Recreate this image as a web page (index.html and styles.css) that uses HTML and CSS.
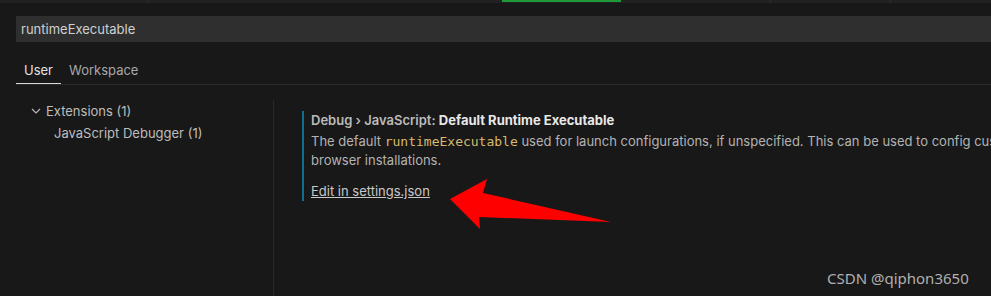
FILE: index.html
```html
<!DOCTYPE html>
<html lang="en">
<head>
    <meta charset="UTF-8">
    <title>Settings</title>
    <link rel="stylesheet" href="styles.css">
</head>
<body>
    <div class="topbar">
        <span class="sep sep-a"></span>
        <span class="progress"></span>
        <span class="sep sep-b"></span>
        <span class="sep sep-c"></span>
    </div>

    <div class="search">runtimeExecutable</div>

    <div class="tabs">
        <span class="tab active">User</span>
        <span class="tab">Workspace</span>
    </div>

    <div class="main">
        <div class="tree">
            <div class="tree-row">
                <svg class="chevron" width="12" height="12" viewBox="0 0 12 12"><path d="M2 4l4 4 4-4" fill="none" stroke="#bbb" stroke-width="1.1"/></svg>
                <span>Extensions (1)</span>
            </div>
            <div class="tree-row child">JavaScript Debugger (1)</div>
        </div>
        <div class="settings">
            <div class="setting">
                <div class="title"><span class="cat">Debug › JavaScript: </span><b>Default Runtime Executable</b></div>
                <div class="desc">The default <code>runtimeExecutable</code> used for launch configurations, if unspecified. This can be used to config custom paths to Node.js or<br>browser installations.</div>
                <a class="edit" href="#">Edit in settings.json</a>
            </div>
        </div>
    </div>

    <!-- annotation arrow -->
    <svg class="arrow" width="991" height="296" viewBox="0 0 991 296">
        <polygon points="450,199 487,179 483,193 611,222 479,217 480,229" fill="#ff0000"/>
    </svg>

    <div class="watermark">CSDN @qiphon3650</div>
</body>
</html>
```

FILE: styles.css
```css
body {
    margin: 0;
    background: #181818;
    color: #cccccc;
    font-family: 'Inter', 'Noto Sans', sans-serif;
    font-size: 13px;
    width: 991px;
    height: 296px;
    overflow: hidden;
    position: relative;
}

.topbar {
    height: 3px;
    background: #212121;
    position: relative;
}

.sep {
    position: absolute;
    top: 0;
    width: 1px;
    height: 3px;
    background: #2c2c2c;
}

.sep-a { left: 148px; }
.sep-b { left: 770px; }
.sep-c { left: 890px; }

.progress {
    position: absolute;
    left: 502px;
    top: 0;
    width: 119px;
    height: 2px;
    background: #1f9a3a;
}

.search {
    margin: 13px 0 0 16px;
    height: 26px;
    line-height: 26px;
    background: #2f2f2f;
    padding-left: 5px;
    color: #d0d0d0;
    font-size: 13px;
}

.tabs {
    margin: 16px 0 0 16px;
    height: 26px;
    border-bottom: 1px solid #2b2b2b;
    display: flex;
}

.tab {
    padding: 0 8px;
    line-height: 24px;
    color: #a8a8a8;
}

.tab.active {
    color: #e2e2e2;
    border-bottom: 1px solid #d8d8d8;
}

.main {
    display: flex;
    margin-top: 15px;
    height: 200px;
}

.tree {
    flex: none;
    width: 257px;
    padding-left: 16px;
    border-right: 1px solid #2a2a2a;
}

.tree-row {
    height: 22px;
    line-height: 22px;
    display: flex;
    align-items: center;
    color: #bdbdbd;
    white-space: nowrap;
}

.chevron {
    margin: 0 4px 0 14px;
}

.tree-row.child {
    padding-left: 38px;
}

.settings {
    flex: 1;
    min-width: 0;
    overflow: hidden;
    padding: 11px 0 0 28px;
}

.setting {
    border-left: 2px solid #116e8e;
    padding-left: 7px;
    height: 90px;
}

.title {
    line-height: 18px;
    color: #bbbbbb;
    font-weight: 600;
}

.title b {
    color: #e8e8e8;
    font-weight: 700;
}

.desc {
    margin-top: 3px;
    line-height: 18px;
    color: #b3b3b3;
    white-space: nowrap;
}

.desc code {
    font-family: 'DejaVu Sans Mono', monospace;
    font-size: 13px;
    color: #d7b96f;
}

.edit {
    display: inline-block;
    margin-top: 14px;
    color: #c8c8c8;
    text-decoration: underline;
}

.arrow {
    position: absolute;
    left: 0;
    top: 0;
}

.watermark {
    position: absolute;
    left: 827px;
    top: 268px;
    font-size: 15px;
    color: #b0b0b0;
    font-family: 'Noto Sans', sans-serif;
}
```
